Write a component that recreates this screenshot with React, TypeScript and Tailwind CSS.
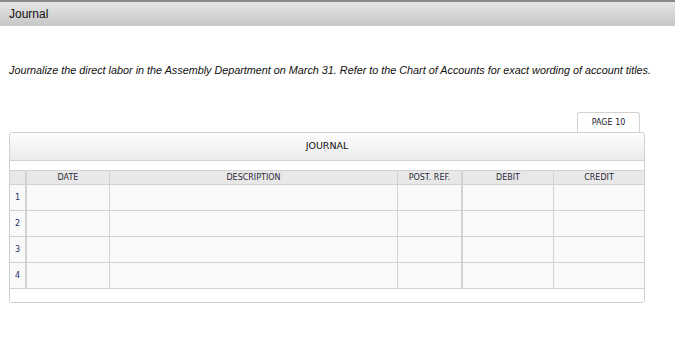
import React from "react";

const rows = [1, 2, 3, 4];

function Cells({ header, n }: { header?: boolean; n?: number }) {
  const base = header ? "bg-[#e8e8e8]" : "bg-[#f9f9f9]";
  const txt = "flex items-center justify-center text-[8px] text-[#2b2b3b]";
  return (
    <div className={`flex ${header ? "h-[14px]" : "h-[26px]"} border-t border-[#d2d2d2] ${base}`}>
      <div className={`w-[17px] shrink-0 border-r-2 border-[#d2d2d2] flex items-center pl-[5px] text-[8px] text-[#1f2f66]`}>
        {n ?? ""}
      </div>
      <div className={`w-[83px] shrink-0 border-r border-[#d2d2d2] ${txt}`}>{header ? "DATE" : ""}</div>
      <div className={`w-[288px] shrink-0 border-r border-[#d2d2d2] ${txt}`}>{header ? "DESCRIPTION" : ""}</div>
      <div className={`w-[65px] shrink-0 border-r-2 border-[#d2d2d2] ${txt}`}>{header ? "POST. REF." : ""}</div>
      <div className={`w-[91px] shrink-0 border-r border-[#d2d2d2] ${txt}`}>{header ? "DEBIT" : ""}</div>
      <div className={`flex-1 ${txt}`}>{header ? "CREDIT" : ""}</div>
    </div>
  );
}

export default function App() {
  return (
    <div className="w-[675px] h-[340px] bg-white" style={{ fontFamily: '"Liberation Sans", Arial, sans-serif' }}>
      <div className="h-[26px] border-t-2 border-[#8a8a8a] bg-gradient-to-b from-[#e6e6e6] to-[#c6c6c6] flex items-center pl-[9px] text-[12px] text-[#111]">
        Journal
      </div>
      <div className="pl-[9px] pt-[37px] text-[10.8px] italic text-[#111] leading-[14px]">
        Journalize the direct labor in the Assembly Department on March 31. Refer to the Chart of Accounts for exact wording of account titles.
      </div>
      <div className="ml-[9px] w-[636px] mt-[35px]" style={{ fontFamily: '"DejaVu Sans", Tahoma, sans-serif' }}>
        <div className="flex justify-end pr-[5px]">
          <div className="w-[63px] h-[20px] border border-b-0 border-[#d2d2d2] rounded-t-[3px] bg-white flex items-center justify-center text-[8px] text-[#1b1b33]">
            PAGE 10
          </div>
        </div>
        <div className="border border-[#cfcfcf] rounded-[3px] bg-white overflow-hidden">
          <div className="h-[28px] border-b border-[#d2d2d2] bg-gradient-to-b from-[#fdfdfd] to-[#ebebeb] flex items-center justify-center text-[9.5px] text-[#111]">
            JOURNAL
          </div>
          <div className="h-[9px] bg-white" />
          <Cells header />
          {rows.map((n) => (
            <Cells key={n} n={n} />
          ))}
          <div className="h-[14px] border-t border-[#d2d2d2] bg-white" />
        </div>
      </div>
    </div>
  );
}
